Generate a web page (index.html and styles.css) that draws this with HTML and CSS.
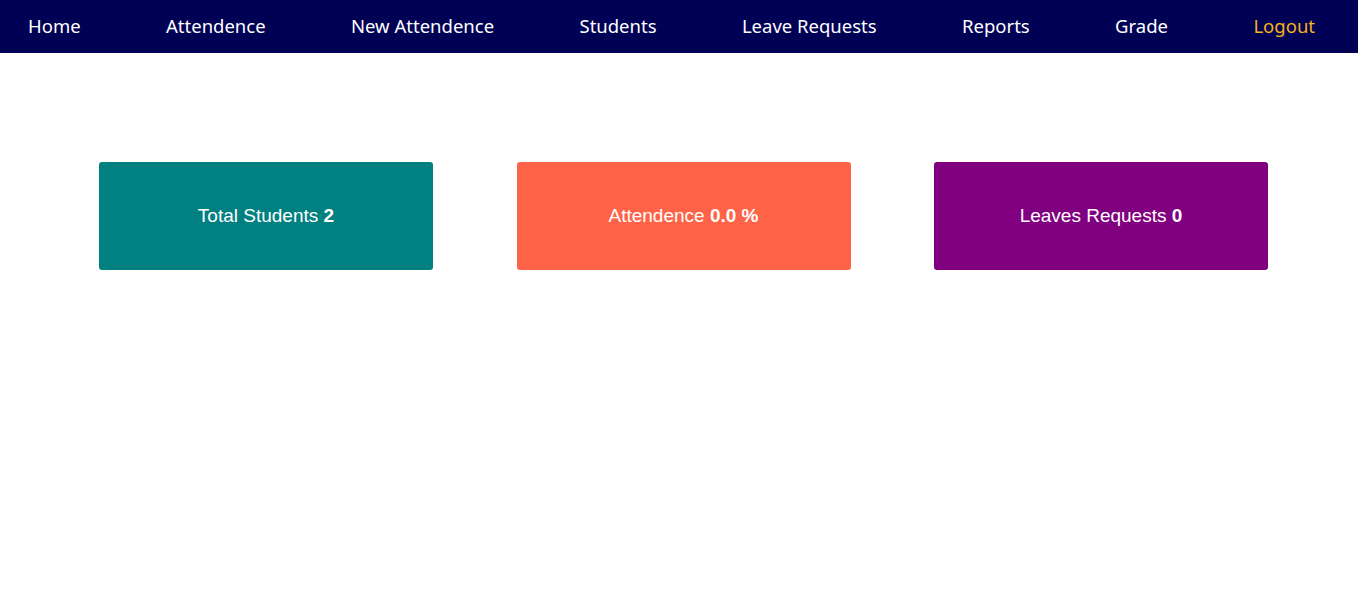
FILE: index.html
```html
<!DOCTYPE html>
<html lang="en">
<head>
<meta charset="utf-8">
<title>Dashboard</title>
<link rel="stylesheet" href="styles.css">
</head>
<body>
<nav class="navbar">
  <a class="nav-link" href="#">Home</a>
  <a class="nav-link" href="#">Attendence</a>
  <a class="nav-link" href="#">New Attendence</a>
  <a class="nav-link" href="#">Students</a>
  <a class="nav-link" href="#">Leave Requests</a>
  <a class="nav-link" href="#">Reports</a>
  <a class="nav-link" href="#">Grade</a>
  <a class="nav-link logout" href="#">Logout</a>
</nav>
<main class="cards">
  <div class="card card-teal"><span>Total Students <b>2</b></span></div>
  <div class="card card-tomato"><span>Attendence <b>0.0 %</b></span></div>
  <div class="card card-purple"><span>Leaves Requests <b>0</b></span></div>
</main>
</body>
</html>
```
FILE: styles.css
```css
* { box-sizing: border-box; }
html, body { margin: 0; padding: 0; background: #fff; }
body { font-family: "Liberation Sans", Arial, sans-serif; }

.navbar {
  height: 53px;
  background: #000055;
  display: flex;
  align-items: center;
  justify-content: space-between;
  padding: 0 43px 0 28px;
}
.nav-link {
  font-family: "Noto Sans", "Open Sans", sans-serif;
  font-size: 18.5px;
  color: #ffffff;
  text-decoration: none;
  line-height: 1;
  padding-bottom: 1px;
}
.nav-link.logout { color: #f5b21d; }

.cards {
  display: flex;
  gap: 83.5px;
  padding: 109px 0 0 99px;
}
.card {
  width: 334px;
  height: 108px;
  border-radius: 3px;
  display: flex;
  align-items: center;
  justify-content: center;
  color: #fff;
  font-size: 19px;
}
.card-teal { background: #008080; }
.card-tomato { background: #ff6347; }
.card-purple { background: #800080; }
```
